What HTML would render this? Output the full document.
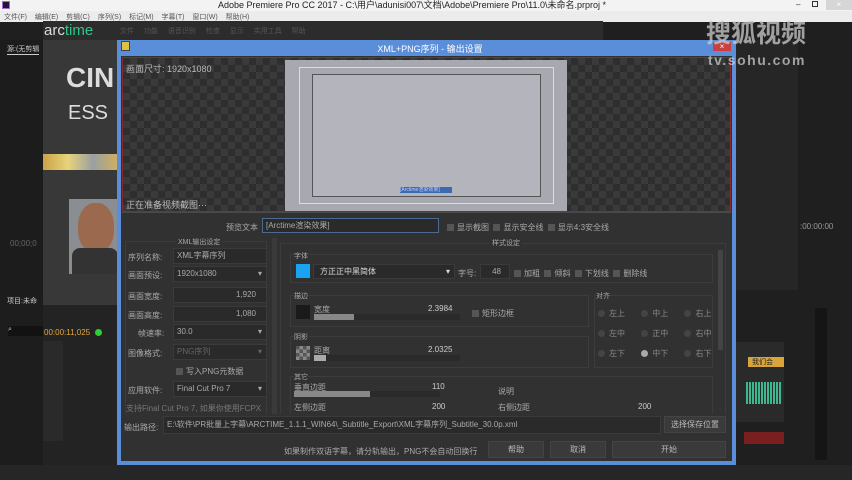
<!DOCTYPE html>
<html><head><meta charset="utf-8"><style>
*{margin:0;padding:0;box-sizing:border-box}
body{width:852px;height:480px;overflow:hidden;background:#1f1f1f;font-family:"Liberation Sans","Noto Sans CJK SC",sans-serif;font-size:8px;color:#bbb;position:relative}
.a{position:absolute}
.chk{background:repeating-conic-gradient(#3a3a3a 0 25%,#2e2e2e 0 50%) 0 0/14px 14px}
.f{position:absolute;background:#2a2a2a;border:1px solid #3a3a3a;color:#aaa;font-size:8px;line-height:14px;padding-left:3px;height:16px}
.lbl{position:absolute;color:#aaa;font-size:8px}
.box{position:absolute;border:1px solid #3c3c3c}
.cb{display:inline-block;width:7px;height:7px;background:#555;margin-right:3px;vertical-align:-1px}
.rd{display:inline-block;width:7px;height:7px;border-radius:50%;background:#444;margin-right:4px;vertical-align:-1px}
.btn{position:absolute;background:#3a3a3a;border:1px solid #444;color:#bbb;text-align:center;line-height:15px;height:17px;font-size:8px}
.sl{position:absolute;height:6px;background:#2a2a2a}
</style></head><body>
<div class="a" style="left:0;top:0;width:852px;height:11px;background:#f3f3f3"></div>
<div class="a" style="left:2px;top:1px;width:8px;height:8px;background:#2a0f3a;border:1px solid #a070d0"></div>
<div class="a" style="left:218px;top:0;color:#222;font-size:9px;line-height:11px">Adobe Premiere Pro CC 2017 - C:\用户\adunisi007\文档\Adobe\Premiere Pro\11.0\未命名.prproj *</div>
<div class="a" style="left:796px;top:0;color:#333;font-size:8px">–</div>
<div class="a" style="left:812px;top:1px;width:6px;height:6px;border:1px solid #333"></div>
<div class="a" style="left:826px;top:0;width:26px;height:10px;background:#d6d6d6;color:#fff;text-align:center;font-size:8px">×</div>
<div class="a" style="left:0;top:11px;width:852px;height:11px;background:#ececec"></div>
<div class="a" style="left:4px;top:12px;color:#555;font-size:7px;word-spacing:6px">文件(F) 编辑(E) 剪辑(C) 序列(S) 标记(M) 字幕(T) 窗口(W) 帮助(H)</div>
<div class="a" style="left:43px;top:21px;width:560px;height:19px;background:#2c2c2c"></div>
<div class="a" style="left:44px;top:21px;font-size:15px;line-height:19px;color:#ddd">arc<span style="color:#2dc68a">time</span></div>
<div class="a" style="left:120px;top:26px;color:#555;font-size:7px;word-spacing:8px">文件 功能 语音识别 检查 显示 实用工具 帮助</div>
<div class="a" style="left:0;top:40px;width:43px;height:260px;background:#1c1c1c"></div>
<div class="a" style="left:7px;top:44px;color:#ccc;font-size:7px;border-bottom:1px solid #ccc">源:(无剪辑</div>
<div class="a" style="left:10px;top:239px;color:#666;font-size:8px">00;00;0</div>
<div class="a" style="left:43px;top:40px;width:75px;height:330px;background:#383838"></div>
<div class="a" style="left:66px;top:62px;color:#ddd;font-size:28px;font-weight:bold">CIN</div>
<div class="a" style="left:68px;top:102px;color:#ddd;font-size:20px">ESS</div>
<div class="a" style="left:43px;top:154px;width:75px;height:16px;background:linear-gradient(90deg,#c9a347,#e7d37c,#9aa0a0,#d0b060)"></div>
<div class="a" style="left:69px;top:199px;width:50px;height:75px;background:#8a8e92"></div>
<div class="a" style="left:78px;top:203px;width:36px;height:50px;border-radius:45%;background:#9b6a4e"></div>
<div class="a" style="left:72px;top:248px;width:46px;height:26px;background:#333;border-radius:8px 8px 0 0"></div>
<div class="a" style="left:0;top:295px;width:43px;height:170px;background:#1d1d1d"></div>
<div class="a" style="left:7px;top:296px;color:#ccc;font-size:7px">项目:未命</div>
<div class="a" style="left:8px;top:326px;width:35px;height:10px;background:#121212;color:#ccc;font-size:7px">⌕</div>
<div class="a" style="left:43px;top:305px;width:75px;height:160px;background:#232323"></div>
<div class="a" style="left:44px;top:328px;color:#e3a53a;font-size:8px">00:00:11,025</div>
<div class="a" style="left:95px;top:329px;width:7px;height:7px;border-radius:50%;background:#3c3"></div>
<div class="a" style="left:43px;top:341px;width:20px;height:100px;background:#2a2a2a"></div>
<div class="a" style="left:0;top:465px;width:852px;height:15px;background:#262626"></div>
<div class="a" style="left:736px;top:40px;width:116px;height:425px;background:#1f1f1f"></div>
<div class="a" style="left:736px;top:40px;width:62px;height:250px;background:#262626"></div>
<div class="a" style="left:800px;top:222px;color:#999;font-size:8px">:00:00:00</div>
<div class="a" style="left:736px;top:342px;width:48px;height:80px;background:#2a2a2a"></div>
<div class="a" style="left:748px;top:357px;width:36px;height:10px;background:#d9a53a;color:#222;font-size:7px;padding-left:4px">我们会</div>
<div class="a" style="left:746px;top:382px;width:36px;height:22px;background:repeating-linear-gradient(90deg,#3cb890 0 2px,transparent 2px 3px)"></div>
<div class="a" style="left:744px;top:432px;width:40px;height:12px;background:#7a1f1f"></div>
<div class="a" style="left:815px;top:308px;width:12px;height:152px;background:#151515"></div>
<!-- dialog -->
<div class="a" style="left:117px;top:40px;width:619px;height:425px;background:#5a8ed8"></div>
<div class="a" style="left:121px;top:41px;width:9px;height:10px;background:#e0c040;border:1px solid #444"></div>
<div class="a" style="left:330px;top:42px;width:200px;text-align:center;color:#fff;font-size:9px">XML+PNG序列 - 输出设置</div>
<div class="a" style="left:713px;top:42px;width:18px;height:9px;background:#c84040;color:#fff;text-align:center;font-size:8px;line-height:9px">×</div>
<div class="a" style="left:121px;top:56px;width:611px;height:405px;background:#313131"></div>
<div class="a chk" style="left:122px;top:57px;width:609px;height:155px;border:1px solid #8a2a2a"></div>
<div class="a" style="left:126px;top:62px;color:#bbb;font-size:9px">画面尺寸: 1920x1080</div>
<div class="a" style="left:126px;top:198px;color:#bbb;font-size:9px">正在准备视频截图···</div>
<div class="a" style="left:285px;top:60px;width:282px;height:151px;background:#a8a8b0"></div>
<div class="a" style="left:299px;top:67px;width:255px;height:137px;border:1px solid #ddd"></div>
<div class="a" style="left:312px;top:74px;width:229px;height:123px;border:1px solid #555;background:#b4b4bc"></div>
<div class="a" style="left:400px;top:187px;width:52px;height:6px;background:#3a6ab0;font-size:5px;color:#ccf;line-height:6px">[Arctime渲染效果]</div>
<div class="a" style="left:122px;top:212px;width:609px;height:1px;background:#4a4a4a"></div>
<div class="lbl" style="left:226px;top:222px">预览文本</div>
<div class="f" style="left:262px;top:218px;width:177px;height:15px;line-height:13px;border-color:#4a6a90">[Arctime渲染效果]</div>
<div class="lbl" style="left:447px;top:222px"><span class="cb"></span>显示截图 &nbsp;<span class="cb"></span>显示安全线 &nbsp;<span class="cb"></span>显示4:3安全线</div>
<div class="box" style="left:125px;top:241px;width:142px;height:176px"></div>
<div class="lbl" style="left:176px;top:237px;background:#313131;padding:0 2px;font-size:7px">XML输出设定</div>
<div class="lbl" style="left:128px;top:252px">序列名称:</div><div class="f" style="left:173px;top:248px;width:94px">XML字幕序列</div>
<div class="lbl" style="left:128px;top:270px">画面预设:</div><div class="f" style="left:173px;top:266px;width:94px">1920x1080<span style="float:right;padding-right:4px">▾</span></div>
<div class="lbl" style="left:128px;top:291px">画面宽度:</div><div class="f" style="left:173px;top:287px;width:94px;text-align:right;padding-right:10px">1,920</div>
<div class="lbl" style="left:128px;top:310px">画面高度:</div><div class="f" style="left:173px;top:306px;width:94px;text-align:right;padding-right:10px">1,080</div>
<div class="lbl" style="left:138px;top:328px">帧速率:</div><div class="f" style="left:173px;top:324px;width:94px">30.0<span style="float:right;padding-right:4px">▾</span></div>
<div class="lbl" style="left:128px;top:348px">图像格式:</div><div class="f" style="left:173px;top:344px;width:94px;color:#666">PNG序列<span style="float:right;padding-right:4px">▾</span></div>
<div class="lbl" style="left:176px;top:366px"><span class="cb"></span>写入PNG元数据</div>
<div class="lbl" style="left:128px;top:385px">应用软件:</div><div class="f" style="left:173px;top:381px;width:94px">Final Cut Pro 7<span style="float:right;padding-right:4px">▾</span></div>
<div class="lbl" style="left:126px;top:403px;color:#777">支持Final Cut Pro 7, 如果你使用FCPX</div>
<div class="a" style="left:272px;top:238px;width:5px;height:180px;background:#3a3a3a"></div>
<div class="box" style="left:280px;top:243px;width:446px;height:175px"></div>
<div class="lbl" style="left:490px;top:238px;background:#313131;padding:0 2px;font-size:7px">样式设定</div>
<div class="a" style="left:718px;top:250px;width:5px;height:100px;background:#444"></div>
<div class="box" style="left:290px;top:254px;width:423px;height:29px"></div>
<div class="lbl" style="left:294px;top:251px;font-size:7px;background:#313131">字体</div>
<div class="a" style="left:296px;top:264px;width:14px;height:14px;background:#1aa3f0"></div>
<div class="f" style="left:313px;top:264px;width:142px;height:15px;color:#ddd;line-height:13px;padding-left:6px">方正正中黑简体<span style="float:right;padding-right:4px">▾</span></div>
<div class="lbl" style="left:458px;top:268px">字号:</div>
<div class="f" style="left:480px;top:264px;width:30px;height:15px;text-align:right;padding-right:8px;line-height:13px">48</div>
<div class="lbl" style="left:514px;top:268px"><span class="cb"></span>加粗 &nbsp;<span class="cb"></span>倾斜 &nbsp;<span class="cb"></span>下划线 &nbsp;<span class="cb"></span>删除线</div>
<div class="box" style="left:290px;top:295px;width:299px;height:32px"></div>
<div class="lbl" style="left:294px;top:291px;font-size:7px;background:#313131">描边</div>
<div class="a" style="left:296px;top:305px;width:14px;height:14px;background:#1a1a1a"></div>
<div class="lbl" style="left:314px;top:304px">宽度</div>
<div class="lbl" style="left:428px;top:304px;color:#ccc">2.3984</div>
<div class="sl" style="left:314px;top:314px;width:146px"></div><div class="sl" style="left:314px;top:314px;width:40px;background:#888"></div>
<div class="lbl" style="left:472px;top:308px"><span class="cb"></span>矩形边框</div>
<div class="box" style="left:290px;top:336px;width:299px;height:32px"></div>
<div class="lbl" style="left:294px;top:332px;font-size:7px;background:#313131">阴影</div>
<div class="a" style="left:296px;top:346px;width:14px;height:14px;background:repeating-conic-gradient(#888 0 25%,#555 0 50%) 0 0/7px 7px"></div>
<div class="lbl" style="left:314px;top:345px">距离</div>
<div class="lbl" style="left:428px;top:345px;color:#ccc">2.0325</div>
<div class="sl" style="left:314px;top:355px;width:146px"></div><div class="sl" style="left:314px;top:355px;width:12px;background:#aaa"></div>
<div class="box" style="left:594px;top:295px;width:119px;height:73px"></div>
<div class="lbl" style="left:596px;top:291px;font-size:7px;background:#313131">对齐</div>
<div class="lbl" style="left:598px;top:308px;word-spacing:14px;color:#888"><span class="rd"></span>左上 <span class="rd"></span>中上 <span class="rd"></span>右上</div>
<div class="lbl" style="left:598px;top:328px;word-spacing:14px;color:#888"><span class="rd"></span>左中 <span class="rd"></span>正中 <span class="rd"></span>右中</div>
<div class="lbl" style="left:598px;top:348px;word-spacing:14px;color:#888"><span class="rd"></span>左下 <span class="rd" style="background:#aaa"></span>中下 <span class="rd"></span>右下</div>
<div class="box" style="left:290px;top:376px;width:423px;height:40px"></div>
<div class="lbl" style="left:294px;top:372px;font-size:7px;background:#313131">其它</div>
<div class="lbl" style="left:294px;top:382px">垂直边距</div><div class="lbl" style="left:432px;top:382px;color:#ccc">110</div>
<div class="sl" style="left:294px;top:391px;width:146px"></div><div class="sl" style="left:294px;top:391px;width:76px;background:#888"></div>
<div class="lbl" style="left:498px;top:386px">说明</div>
<div class="lbl" style="left:294px;top:402px">左侧边距</div><div class="lbl" style="left:432px;top:402px;color:#ccc">200</div>
<div class="lbl" style="left:498px;top:402px">右侧边距</div><div class="lbl" style="left:638px;top:402px;color:#ccc">200</div>
<div class="a" style="left:121px;top:414px;width:611px;height:47px;background:#313131"></div>
<div class="lbl" style="left:124px;top:422px">输出路径:</div>
<div class="f" style="left:163px;top:416px;width:498px;height:18px;line-height:16px">E:\软件\PR批量上字幕\ARCTIME_1.1.1_WIN64\_Subtitle_Export\XML字幕序列_Subtitle_30.0p.xml</div>
<div class="btn" style="left:664px;top:416px;width:62px">选择保存位置</div>
<div class="lbl" style="left:284px;top:446px">如果制作双语字幕，请分轨输出，PNG不会自动回换行</div>
<div class="btn" style="left:488px;top:441px;width:56px">帮助</div>
<div class="btn" style="left:550px;top:441px;width:56px">取消</div>
<div class="btn" style="left:612px;top:441px;width:114px">开始</div>
<!-- watermark on top -->
<div class="a" style="left:706px;top:20px;color:#ccc;font-size:25px;line-height:28px;font-weight:bold;opacity:.75;white-space:nowrap">搜狐视频</div>
<div class="a" style="left:708px;top:52px;color:#ccc;font-size:14px;font-weight:bold;letter-spacing:1.5px;opacity:.75;white-space:nowrap">tv.sohu.com</div>
</body></html>
